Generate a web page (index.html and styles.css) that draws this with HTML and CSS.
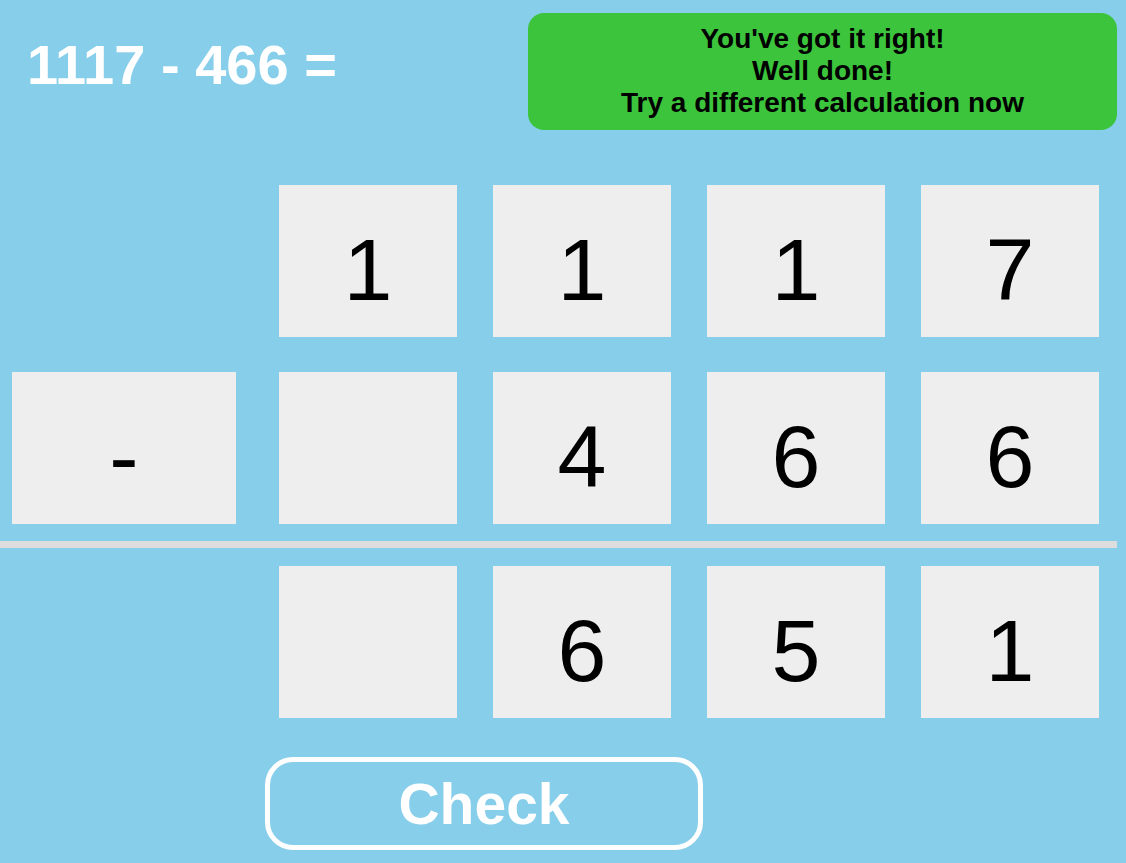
FILE: index.html
```html
<!DOCTYPE html>
<html lang="en">
<head>
<meta charset="utf-8">
<title>Subtraction</title>
<link rel="stylesheet" href="styles.css">
</head>
<body>
<div class="page">
  <header class="header">
    <div class="title">1117 - 466 =</div>
    <div class="feedback">You've got it right!<br>Well done!<br>Try a different calculation now</div>
  </header>

  <div class="row row-first">
    <div class="slot"></div>
    <div class="cell">1</div>
    <div class="cell">1</div>
    <div class="cell">1</div>
    <div class="cell">7</div>
  </div>

  <div class="row row-second">
    <div class="cell op">-</div>
    <div class="cell"></div>
    <div class="cell">4</div>
    <div class="cell">6</div>
    <div class="cell">6</div>
  </div>

  <div class="divider"></div>

  <div class="row row-result">
    <div class="slot"></div>
    <div class="cell"></div>
    <div class="cell">6</div>
    <div class="cell">5</div>
    <div class="cell">1</div>
  </div>

  <button class="check" type="button">Check</button>
</div>
</body>
</html>
```

FILE: styles.css
```css
html, body {
  margin: 0;
  padding: 0;
}

body {
  background: #87ceeb;
  font-family: "Liberation Sans", Arial, sans-serif;
  color: #000;
}

.page {
  width: 1117px;
}

.header {
  display: flex;
  justify-content: space-between;
  align-items: flex-start;
  padding-top: 13px;
}

.title {
  margin: 20px 0 0 27px;
  font-size: 56px;
  font-weight: bold;
  line-height: 64px;
  color: #fff;
}

.feedback {
  width: 589px;
  box-sizing: border-box;
  padding: 10px 0 11px;
  background: #3cc43c;
  border-radius: 16px;
  text-align: center;
  font-size: 28px;
  font-weight: bold;
  line-height: normal;
}

.row {
  display: grid;
  grid-template-columns: 231px repeat(4, 178px);
  column-gap: 36px;
  padding-left: 12px;
  height: 152px;
}

.row-first {
  margin-top: 55px;
}

.row-second {
  margin-top: 35px;
}

.row-result {
  margin-top: 18px;
}

.cell {
  box-sizing: border-box;
  height: 152px;
  padding-top: 17px;
  background: #eeeeee;
  display: flex;
  justify-content: center;
  align-items: center;
  font-size: 88px;
  line-height: 1;
}

.cell.op {
  width: 224px;
}

.divider {
  margin-top: 17px;
  height: 7px;
  background: #dddddd;
}

.check {
  display: block;
  margin: 39px 0 0 265px;
  width: 438px;
  height: 93px;
  box-sizing: border-box;
  border: 5px solid #fff;
  border-radius: 28px;
  background: transparent;
  color: #fff;
  font-family: "Liberation Sans", Arial, sans-serif;
  font-size: 57px;
  font-weight: bold;
  line-height: normal;
  padding: 0;
}
```
